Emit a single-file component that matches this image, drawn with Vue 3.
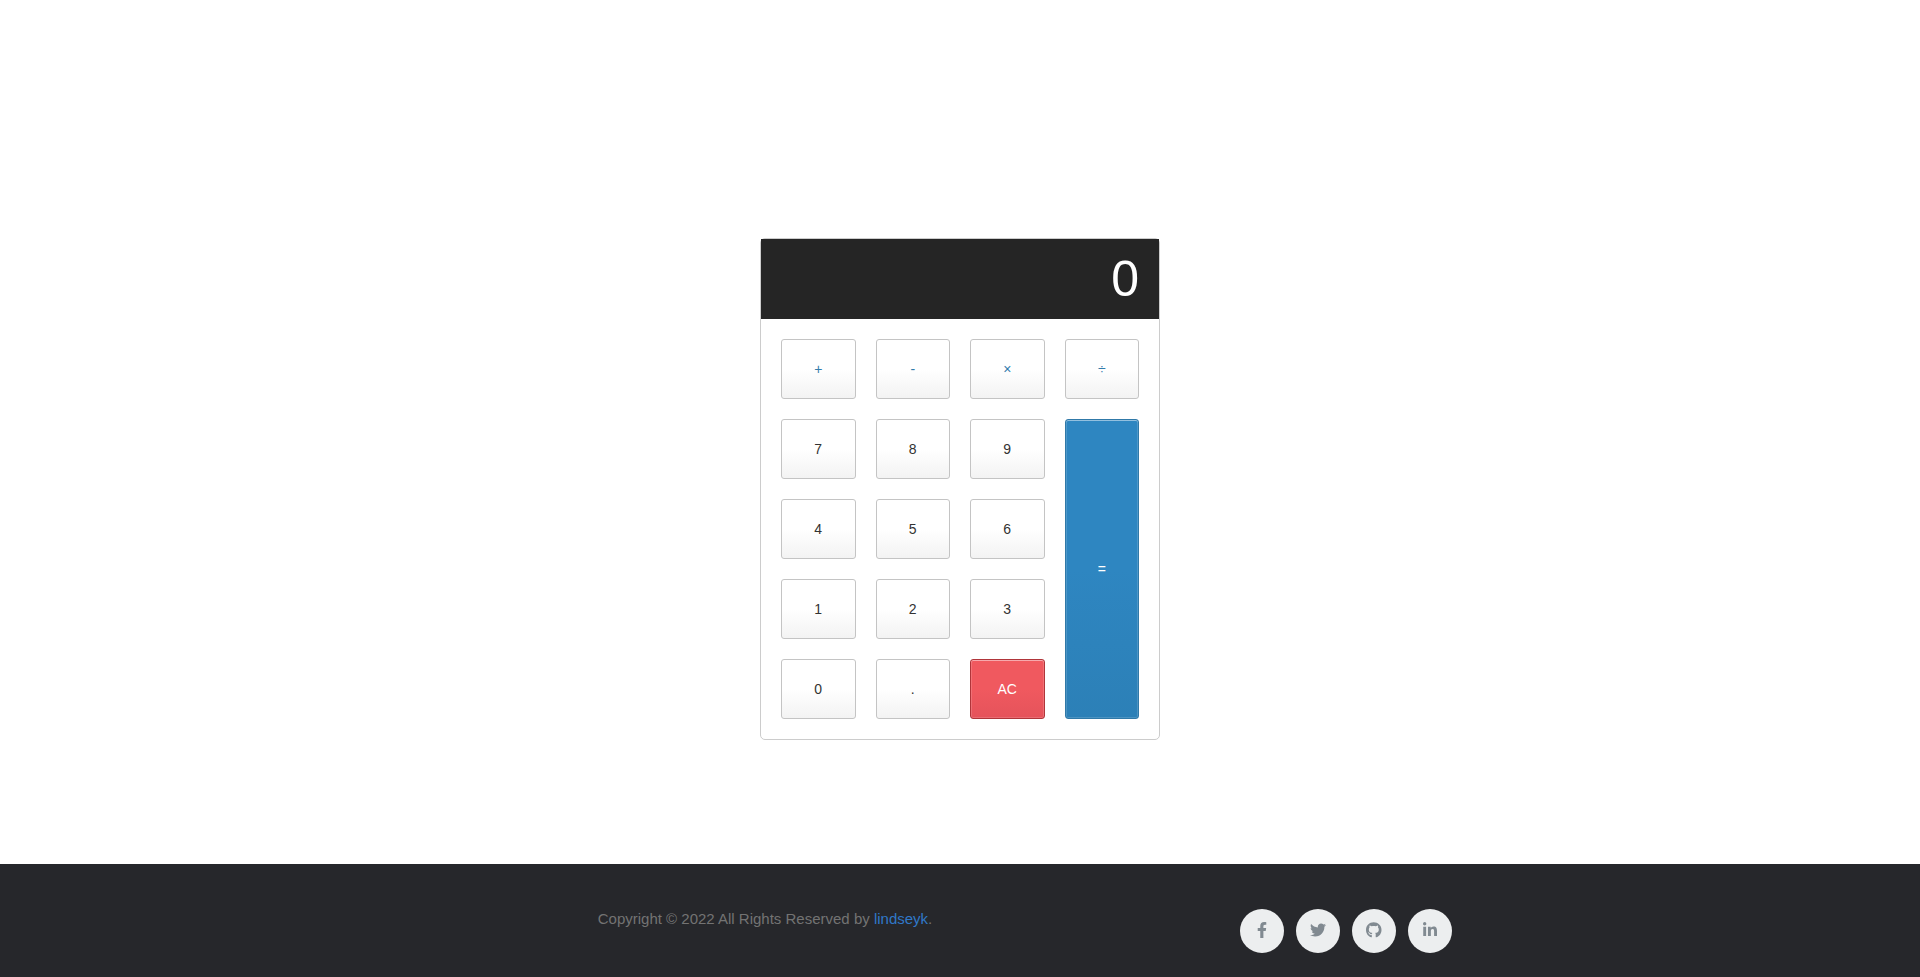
<template>
  <div class="page">
    <main>
      <div class="calculator">
        <input
          v-model="display"
          type="text"
          class="calculator-screen"
          aria-label="Result"
          readonly
        />
        <div class="calculator-keys">
          <button
            v-for="key in keys"
            :key="key.value"
            type="button"
            class="key"
            :class="key.type"
            @click="press(key)"
          >{{ key.label || key.value }}</button>
        </div>
      </div>
    </main>

    <footer class="site-footer">
      <div class="container">
        <p class="copyright">
          Copyright © 2022 All Rights Reserved by <a href="#">lindseyk</a>.
        </p>
        <ul class="social-icons">
          <li v-for="icon in icons" :key="icon.name">
            <a href="#" :aria-label="icon.name">
              <svg :viewBox="`0 0 ${icon.width} 512`">
                <path :d="icon.path" />
              </svg>
            </a>
          </li>
        </ul>
      </div>
    </footer>
  </div>
</template>

<script setup>
import { ref } from 'vue'

const display = ref('0')
const first = ref(null)
const operator = ref(null)
const waiting = ref(false)

const keys = [
  { value: '+', type: 'operator' },
  { value: '-', type: 'operator' },
  { value: '*', label: '×', type: 'operator' },
  { value: '/', label: '÷', type: 'operator' },
  { value: '7' },
  { value: '8' },
  { value: '9' },
  { value: '4' },
  { value: '5' },
  { value: '6' },
  { value: '1' },
  { value: '2' },
  { value: '3' },
  { value: '0' },
  { value: '.' },
  { value: 'AC', type: 'all-clear' },
  { value: '=', type: 'equal-sign' },
]

const calculate = (a, b, op) => {
  if (op === '+') return a + b
  if (op === '-') return a - b
  if (op === '*') return a * b
  if (op === '/') return a / b
  return b
}

function press({ value, type }) {
  if (type === 'all-clear') {
    display.value = '0'
    first.value = null
    operator.value = null
    waiting.value = false
    return
  }
  if (type) {
    const current = parseFloat(display.value)
    if (operator.value && !waiting.value) {
      const result = calculate(first.value, current, operator.value)
      display.value = String(parseFloat(result.toFixed(7)))
    }
    first.value = parseFloat(display.value)
    operator.value = type === 'operator' ? value : null
    waiting.value = true
    return
  }
  if (waiting.value) {
    display.value = value === '.' ? '0.' : value
    waiting.value = false
    return
  }
  if (value === '.') {
    if (!display.value.includes('.')) display.value += '.'
    return
  }
  display.value = display.value === '0' ? value : display.value + value
}

const icons = [
  {
    name: 'Facebook',
    width: 320,
    path: 'M279.14 288l14.22-92.66h-88.91v-60.13c0-25.35 12.42-50.06 52.24-50.06h40.42V6.26S260.43 0 225.36 0c-73.22 0-121.08 44.38-121.08 124.72v70.62H22.89V288h81.39v224h100.17V288z',
  },
  {
    name: 'Twitter',
    width: 512,
    path: 'M459.37 151.716c.325 4.548.325 9.097.325 13.645 0 138.72-105.583 298.558-298.558 298.558-59.452 0-114.68-17.219-161.137-47.106 8.447.974 16.568 1.299 25.34 1.299 49.055 0 94.213-16.568 130.274-44.832-46.132-.975-84.792-31.188-98.112-72.772 6.498.974 12.995 1.624 19.818 1.624 9.421 0 18.843-1.3 27.614-3.573-48.081-9.747-84.143-51.98-84.143-102.985v-1.299c13.969 7.797 30.214 12.67 47.431 13.319-28.264-18.843-46.781-51.005-46.781-87.391 0-19.492 5.197-37.36 14.294-52.954 51.655 63.675 129.3 105.258 216.365 109.807-1.624-7.797-2.599-15.918-2.599-24.04 0-57.828 46.782-104.934 104.934-104.934 30.213 0 57.502 12.67 76.67 33.137 23.715-4.548 46.456-13.32 66.599-25.34-7.798 24.366-24.366 44.833-46.132 57.827 21.117-2.273 41.584-8.122 60.426-16.243-14.292 20.791-32.161 39.308-52.628 54.253z',
  },
  {
    name: 'GitHub',
    width: 496,
    path: 'M244.8 8C106.1 8 0 113.3 0 252c0 110.9 69.8 205.8 169.5 239.2 12.8 2.3 17.3-5.6 17.3-12.1 0-6.2-.3-40.4-.3-61.4 0 0-70 15-84.7-29.8 0 0-11.4-29.1-27.8-36.6 0 0-22.9-15.7 1.6-15.4 0 0 24.9 2 38.6 25.8 21.9 38.6 58.6 27.5 72.9 20.9 2.3-16 8.8-27.1 16-33.7-55.9-6.2-112.3-14.3-112.3-110.5 0-27.5 7.6-41.3 23.6-58.9-2.6-6.5-11.1-33.3 2.6-67.9 20.9-6.5 69 27 69 27 20-5.6 41.5-8.5 62.8-8.5s42.8 2.9 62.8 8.5c0 0 48.1-33.6 69-27 13.7 34.7 5.2 61.4 2.6 67.9 16 17.7 25.8 31.5 25.8 58.9 0 96.5-58.9 104.2-114.8 110.5 9.2 7.9 17 22.9 17 46.4 0 33.7-.3 75.4-.3 83.6 0 6.5 4.6 14.4 17.3 12.1C428.2 457.8 496 362.9 496 252 496 113.3 383.5 8 244.8 8z',
  },
  {
    name: 'LinkedIn',
    width: 448,
    path: 'M100.28 448H7.4V148.9h92.88zM53.79 108.1C24.09 108.1 0 83.5 0 53.8a53.79 53.79 0 0 1 107.58 0c0 29.7-24.1 54.3-53.79 54.3zM447.9 448h-92.68V302.4c0-34.7-.7-79.2-48.29-79.2-48.29 0-55.69 37.7-55.69 76.7V448h-92.78V148.9h89.08v40.8h1.3c12.4-23.5 42.69-48.3 87.88-48.3 94 0 111.28 61.9 111.28 142.3V448z',
  },
]
</script>

<style>
body {
  margin: 0;
  background: #fff;
}
</style>

<style scoped>
.page {
  display: flex;
  flex-direction: column;
  min-height: 100vh;
  font-family: Arial, "Liberation Sans", sans-serif;
}

.page * {
  box-sizing: border-box;
}

main {
  flex: 1;
  display: flex;
  align-items: center;
  justify-content: center;
  padding-top: 114px;
}

.calculator {
  width: 400px;
  max-width: 100%;
  border: 1px solid #ccc;
  border-radius: 5px;
}

.calculator-screen {
  display: block;
  width: 100%;
  height: 80px;
  padding: 0 20px;
  border: none;
  background: #252525;
  color: #fff;
  font-family: inherit;
  font-size: 50px;
  text-align: right;
}

.calculator-keys {
  display: grid;
  grid-template-columns: repeat(4, 1fr);
  gap: 20px;
  padding: 20px;
}

.key {
  height: 60px;
  padding: 0;
  border: 1px solid #c4c4c4;
  border-radius: 3px;
  background: linear-gradient(#fff, #fff 50%, #f3f3f3);
  color: #333;
  font-family: inherit;
  font-size: 14px;
  cursor: pointer;
}

.operator {
  color: #337cac;
}

.all-clear {
  border-color: #b0353a;
  background: linear-gradient(#f0595f, #f0595f 50%, #e5535b);
  box-shadow: inset 0 0 0 1px rgba(255, 255, 255, 0.15), inset 0 1px 0 rgba(255, 255, 255, 0.4);
  color: #fff;
}

.equal-sign {
  grid-area: 2 / 4 / 6 / 5;
  height: 100%;
  border-color: #3079a8;
  background: linear-gradient(#2e86c1, #2e86c1 50%, #2c80b7);
  box-shadow: inset 0 0 0 1px rgba(255, 255, 255, 0.15), inset 0 1px 0 rgba(255, 255, 255, 0.4);
  color: #fff;
}

.site-footer {
  padding: 45px 0 24px;
  background: #26272b;
  color: #737373;
  font-size: 15px;
  line-height: 20px;
}

.container {
  display: grid;
  grid-template-columns: 2fr 1fr;
  max-width: 1170px;
  margin: 0 auto;
}

.copyright {
  margin: 0;
  text-align: center;
}

.copyright a {
  color: #3078c8;
  text-decoration: none;
}

.social-icons {
  display: flex;
  justify-content: center;
  gap: 12px;
  margin: 0;
  padding: 0 8px 0 0;
  list-style: none;
}

.social-icons a {
  display: flex;
  align-items: center;
  justify-content: center;
  width: 44px;
  height: 44px;
  padding-bottom: 2px;
  border-radius: 50%;
  background: #eceeef;
}

.social-icons svg {
  height: 16px;
  fill: #818a91;
}
</style>
